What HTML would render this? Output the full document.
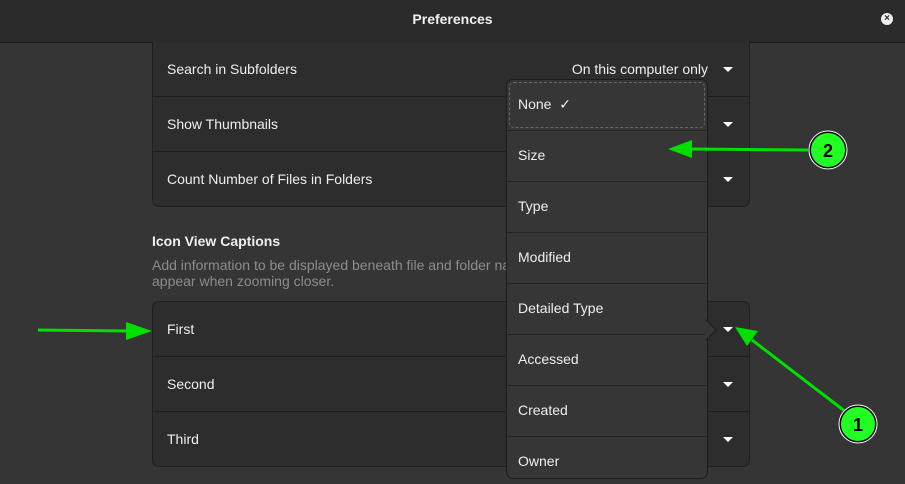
<!DOCTYPE html>
<html><head><style>
body{margin:0;width:905px;height:484px;background:#353535;font-family:"Liberation Sans","DejaVu Sans",sans-serif;color:#eee;position:relative;overflow:hidden;font-size:14px}
.hdr{position:absolute;left:0;top:0;width:905px;height:42px;background:#2b2b2b;border-bottom:1px solid #1c1c1c}
.hdr .t{position:absolute;left:0;right:0;top:11px;text-align:center;font-weight:bold;font-size:14px;color:#f0f0f0}
.x{position:absolute;left:881px;top:13px;width:12px;height:12px;border-radius:50%;background:#eee;color:#2b2b2b;font-size:10px;line-height:12px;text-align:center;font-weight:bold}
.card{position:absolute;left:152px;width:596px;background:#2d2d2d;border:1px solid #1f1f1f;border-radius:7px}
.row{height:54px;border-bottom:1px solid #1f1f1f;position:relative}
.row:last-child{border-bottom:none}
.row span{position:absolute;left:14px;top:19px}
.row i{position:absolute;right:16px;top:25px;width:0;height:0;border-left:5px solid transparent;border-right:5px solid transparent;border-top:5px solid #fff}
.row b{position:absolute;right:41px;top:19px;font-weight:normal}
.h{position:absolute;left:152px;top:233px;font-weight:bold}
.d{position:absolute;left:152px;top:257px;color:#8c8c8c;line-height:16px;width:600px;white-space:nowrap}
.pop{position:absolute;left:506px;top:79px;width:200px;height:398px;background:#363636;border:1px solid #1c1c1c;border-radius:7px;overflow:hidden}
.it{height:50px;border-bottom:1px solid #262626;position:relative}
.it span{position:absolute;left:11px;top:16px}
.it:last-child{border-bottom:none}
.foc{position:absolute;left:2px;top:2px;width:194px;height:44px;border:1px dashed #666;border-radius:5px}
</style></head><body>
<div class="hdr"><div class="t">Preferences</div><div class="x">×</div></div>
<div class="card" style="top:42px;border-top:none;border-radius:0 0 7px 7px">
<div class="row"><span>Search in Subfolders</span><b>On this computer only</b><i></i></div>
<div class="row"><span>Show Thumbnails</span><i></i></div>
<div class="row"><span>Count Number of Files in Folders</span><i></i></div>
</div>
<div class="h">Icon View Captions</div>
<div class="d">Add information to be displayed beneath file and folder names. More information will<br>appear when zooming closer.</div>
<div class="card" style="top:301px">
<div class="row"><span>First</span><i></i></div>
<div class="row"><span>Second</span><i></i></div>
<div class="row"><span>Third</span><i></i></div>
</div>
<div class="pop">
<div class="it"><div class="foc"></div><span>None&nbsp; ✓</span></div>
<div class="it"><span>Size</span></div>
<div class="it"><span>Type</span></div>
<div class="it"><span>Modified</span></div>
<div class="it"><span>Detailed Type</span></div>
<div class="it"><span>Accessed</span></div>
<div class="it"><span>Created</span></div>
<div class="it"><span>Owner</span></div>
</div>
<svg width="905" height="484" style="position:absolute;left:0;top:0">
<polygon points="706,320 716,330 706,340" fill="#363636" stroke="#1c1c1c"/>
<line x1="706" y1="321" x2="706" y2="339" stroke="#363636" stroke-width="2"/>
<g stroke="#00e000" stroke-width="3" fill="#00e000">
<line x1="38" y1="330" x2="130" y2="331"/>
<polygon points="152,331 126,322 126,340" stroke="none"/>
<line x1="808" y1="150" x2="690" y2="149"/>
<polygon points="668,149 692,140 692,158" stroke="none"/>
<line x1="846" y1="412" x2="752" y2="340"/>
<polygon points="735,327 758,331 747,346" stroke="none"/>
</g>
<circle cx="828" cy="150" r="18" fill="#22ff22" stroke="#000" stroke-width="2"/>
<circle cx="828" cy="150" r="19" fill="none" stroke="#fff" stroke-width="1"/>
<text x="828" y="157" text-anchor="middle" font-weight="bold" font-size="18" font-family="Liberation Sans,sans-serif" fill="#000">2</text>
<circle cx="858" cy="424" r="18" fill="#22ff22" stroke="#000" stroke-width="2"/>
<circle cx="858" cy="424" r="19" fill="none" stroke="#fff" stroke-width="1"/>
<text x="858" y="431" text-anchor="middle" font-weight="bold" font-size="18" font-family="Liberation Sans,sans-serif" fill="#000">1</text>
</svg>
</body></html>
